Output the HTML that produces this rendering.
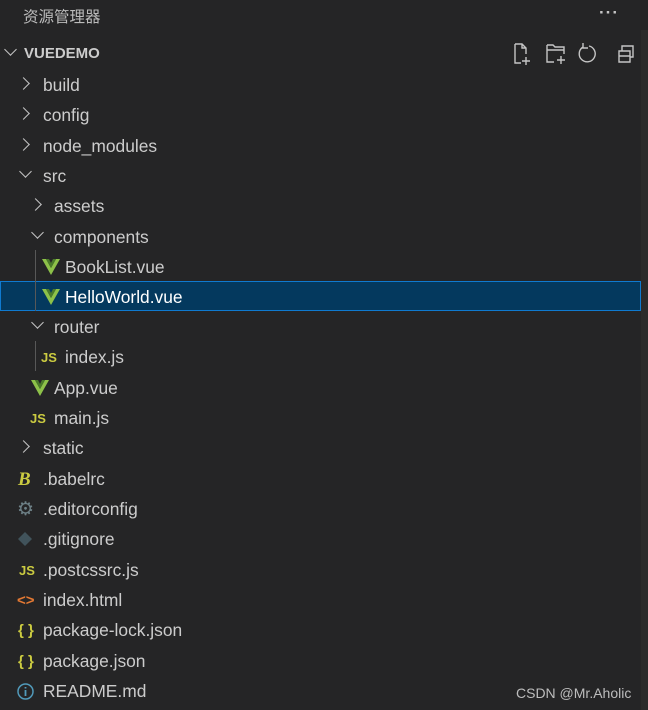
<!DOCTYPE html>
<html><head><meta charset="utf-8"><style>
body{margin:0;width:648px;height:710px;background:#252526;position:relative;overflow:hidden;font-family:"Liberation Sans","Noto Sans CJK SC",sans-serif;color:#cccccc}
.r{position:absolute;left:0;width:641px;height:30px;font-size:17.4px;line-height:32px;white-space:nowrap}
.t{position:absolute;top:0}
.ch{position:absolute;top:10px;width:8px;height:8px;border-right:1.5px solid #c5c5c5;border-bottom:1.5px solid #c5c5c5}
.cr{transform:rotate(-45deg)}
.cd{transform:rotate(45deg);top:7px}
.js{position:absolute;font-weight:bold;font-size:13px;color:#cbcb41;top:1px}
.ic{position:absolute;top:1px}
.g{position:absolute;width:1px;background:#585858;left:35px}
</style></head><body>
<div style="position:absolute;left:23px;top:5px;font-size:15.5px;color:#bbbbbb">资源管理器</div>
<div style="position:absolute;left:599px;top:3px;font-size:17px;font-weight:bold;letter-spacing:1px;color:#c5c5c5">···</div>
<div class="r" style="top:38px;font-weight:bold;font-size:15px"><span class="ch cd" style="left:6px"></span><span class="t" style="left:24px">VUEDEMO</span></div>
<svg style="position:absolute;left:512px;top:42px" width="124" height="24" fill="none" stroke="#c5c5c5" stroke-width="1.4">
<path d="M3 2h7l4 4v6M3 2v19h6M10 2v4h4M14 15v8M10 19h8"/>
<path d="M35 3h6l2 2h9v7M35 3v17h7M35 8h17M49 14v8M45 18h8"/>
<path d="M71 5a8 8 0 1 0 6-1M71 1v5h5"/>
<path d="M107 9h11v11h-11zM110 9v-5h11v11h-3M107 14h11"/>
</svg>
<div style="position:absolute;left:641px;top:30px;width:7px;height:680px;background:#2b2b2b"></div>
<div style="position:absolute;left:0;top:281px;width:639px;height:28px;background:#04395e;border:1px solid #0f7ad0"></div>
<div class="g" style="top:250px;height:61px"></div>
<div class="g" style="top:341px;height:30px"></div>

<div class="r" style="top:69px"><span class="ch cr" style="left:19px"></span><span class="t" style="left:43px">build</span></div>
<div class="r" style="top:99px"><span class="ch cr" style="left:19px"></span><span class="t" style="left:43px">config</span></div>
<div class="r" style="top:130px"><span class="ch cr" style="left:19px"></span><span class="t" style="left:43px">node_modules</span></div>
<div class="r" style="top:160px"><span class="ch cd" style="left:21px"></span><span class="t" style="left:43px">src</span></div>
<div class="r" style="top:190px"><span class="ch cr" style="left:31px"></span><span class="t" style="left:54px">assets</span></div>
<div class="r" style="top:221px"><span class="ch cd" style="left:33px"></span><span class="t" style="left:54px">components</span></div>
<div class="r" style="top:251px"><svg class="ic" style="left:42px;top:8px" width="18" height="16"><path d="M0 0h4l5 9 5-9h4l-9 16z" fill="#8dc149"/><path d="M4 0h3l2 4 2-4h3l-5 9z" fill="#4a7a2a"/></svg><span class="t" style="left:65px">BookList.vue</span></div>
<div class="r" style="top:281px;color:#fff"><svg class="ic" style="left:42px;top:8px" width="18" height="16"><path d="M0 0h4l5 9 5-9h4l-9 16z" fill="#8dc149"/><path d="M4 0h3l2 4 2-4h3l-5 9z" fill="#4a7a2a"/></svg><span class="t" style="left:65px">HelloWorld.vue</span></div>
<div class="r" style="top:311px"><span class="ch cd" style="left:33px"></span><span class="t" style="left:54px">router</span></div>
<div class="r" style="top:341px"><span class="js" style="left:41px">JS</span><span class="t" style="left:65px">index.js</span></div>
<div class="r" style="top:372px"><svg class="ic" style="left:31px;top:8px" width="18" height="16"><path d="M0 0h4l5 9 5-9h4l-9 16z" fill="#8dc149"/><path d="M4 0h3l2 4 2-4h3l-5 9z" fill="#4a7a2a"/></svg><span class="t" style="left:54px">App.vue</span></div>
<div class="r" style="top:402px"><span class="js" style="left:30px">JS</span><span class="t" style="left:54px">main.js</span></div>
<div class="r" style="top:432px"><span class="ch cr" style="left:19px"></span><span class="t" style="left:43px">static</span></div>
<div class="r" style="top:463px"><span class="ic" style="left:18px;color:#cbcb41;font-style:italic;font-weight:bold;font-family:'Liberation Serif',serif;font-size:19px">B</span><span class="t" style="left:43px">.babelrc</span></div>
<div class="r" style="top:493px"><span class="ic" style="left:17px;color:#6d8086;font-size:19px">⚙</span><span class="t" style="left:43px">.editorconfig</span></div>
<div class="r" style="top:523px"><svg class="ic" style="left:18px;top:9px" width="14" height="14"><path d="M7 0l7 7-7 7-7-7z" fill="#41535b"/></svg><span class="t" style="left:43px">.gitignore</span></div>
<div class="r" style="top:554px"><span class="js" style="left:19px">JS</span><span class="t" style="left:43px">.postcssrc.js</span></div>
<div class="r" style="top:584px"><span class="ic" style="left:17px;color:#e37933;font-weight:bold;font-size:15px">&lt;&gt;</span><span class="t" style="left:43px">index.html</span></div>
<div class="r" style="top:614px"><span class="ic" style="left:18px;color:#cbcb41;font-weight:bold;font-size:15px">{ }</span><span class="t" style="left:43px">package-lock.json</span></div>
<div class="r" style="top:645px"><span class="ic" style="left:18px;color:#cbcb41;font-weight:bold;font-size:15px">{ }</span><span class="t" style="left:43px">package.json</span></div>
<div class="r" style="top:675px"><svg class="ic" style="left:17px;top:8px" width="17" height="17"><circle cx="8.5" cy="8.5" r="7.5" fill="none" stroke="#519aba" stroke-width="1.5"/><path d="M8.5 7v6M8.5 4v1.5" stroke="#519aba" stroke-width="1.8"/></svg><span class="t" style="left:43px">README.md</span></div>
<div style="position:absolute;left:516px;top:685px;font-size:14px;color:#bdbdbd">CSDN @Mr.Aholic</div>
</body></html>
